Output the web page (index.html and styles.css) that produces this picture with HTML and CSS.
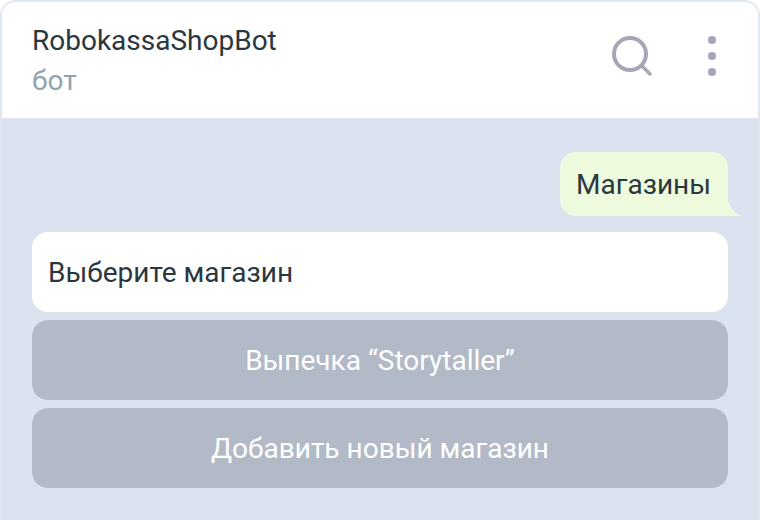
FILE: index.html
```html
<!DOCTYPE html>
<html lang="ru">
<head>
    <meta charset="UTF-8">
    <meta name="viewport" content="width=device-width, initial-scale=1.0">
    <title>RobokassaShopBot</title>
    <link rel="stylesheet" href="styles.css">
</head>
<body>
    <div class="chat">
        <div class="chat-header">
            <div class="chat-title">
                <div class="chat-name">RobokassaShopBot</div>
                <div class="chat-status">бот</div>
            </div>
            <div class="chat-actions">
                <svg class="icon-search" width="40" height="40" viewBox="0 0 40 40" fill="none" stroke="#a8a6b6">
                    <circle cx="18" cy="18" r="16" stroke-width="4"/>
                    <path d="M30 30 L38 38" stroke-width="3.6" stroke-linecap="round"/>
                </svg>
                <div class="icon-more">
                    <span class="dot"></span>
                    <span class="dot"></span>
                    <span class="dot"></span>
                </div>
            </div>
        </div>
        <div class="chat-body">
            <div class="bubble-out">
                Магазины
                <svg class="bubble-tail" width="14" height="20" viewBox="0 0 14 20">
                    <path d="M0 0 C0 10 6 17 14 20 L0 20 Z" fill="#edfade"/>
                </svg>
            </div>
            <div class="bubble-in">Выберите магазин</div>
            <button class="bot-button">Выпечка “Storytaller”</button>
            <button class="bot-button">Добавить новый магазин</button>
        </div>
    </div>
</body>
</html>
```

FILE: styles.css
```css
html, body {
    height: 100%;
}

body {
    margin: 0;
    font-family: Roboto, Arial, sans-serif;
    font-size: 28px;
    line-height: 40px;
    color: #2a373e;
    background: white;
}

.chat {
    box-sizing: border-box;
    height: 520px;
    display: flex;
    flex-direction: column;
    border: 2px solid #dfe7ef;
    border-bottom: none;
    border-radius: 16px 16px 0 0;
    overflow: hidden;
}

.chat-header {
    box-sizing: border-box;
    height: 116px;
    flex-shrink: 0;
    display: flex;
    justify-content: space-between;
    align-items: flex-start;
    padding: 19px 42px 0 30px;
    background: white;
}

.chat-status {
    color: #90a4ae;
}

.chat-actions {
    display: flex;
    align-items: center;
    gap: 56px;
    margin-top: 15px;
}

.icon-search {
    display: block;
}

.icon-more {
    display: flex;
    flex-direction: column;
    gap: 8px;
}

.dot {
    width: 8px;
    height: 8px;
    border-radius: 50%;
    background: #a8a6b6;
}

.chat-body {
    flex: 1;
    display: flex;
    flex-direction: column;
    gap: 8px;
    padding: 34px 30px 0;
    background: #dce3f0;
}

.bubble-out {
    position: relative;
    align-self: flex-end;
    padding: 13px 17px 11px 16px;
    margin-bottom: 8px;
    background: #edfade;
    border-radius: 16px 16px 0 16px;
}

.bubble-tail {
    position: absolute;
    left: 100%;
    bottom: 0;
}

.bubble-in {
    padding: 21px 16px 19px;
    background: white;
    border-radius: 16px;
}

.bot-button {
    height: 80px;
    padding: 0;
    border: none;
    border-radius: 16px;
    background: #b2b9c7;
    color: white;
    font-family: inherit;
    font-size: 28px;
}
```
